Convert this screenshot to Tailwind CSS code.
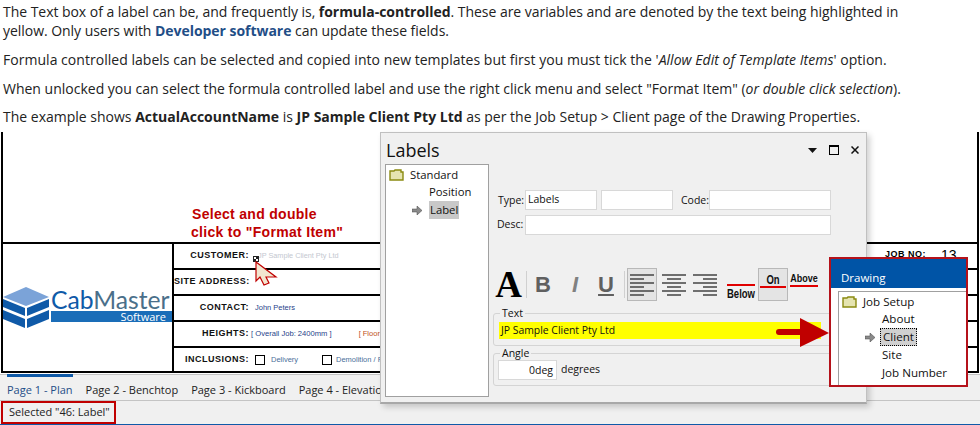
<!DOCTYPE html>
<html>
<head>
<meta charset="utf-8">
<script src="https://cdn.jsdelivr.net/npm/@tailwindcss/browser@4"></script>
</head>
<body class="bg-white overflow-hidden font-['Open_Sans',sans-serif]">
<div class="relative w-[980px] h-[425px] overflow-hidden flex flex-col">
  <!-- help text -->
  <div class="h-[132px] shrink-0 pl-[3px] pt-[2px] text-[14px] leading-[19px] text-[#222]">
    <p class="whitespace-nowrap tracking-[-0.04px]">The Text box of a label can be, and frequently is, <b>formula-controlled</b>. These are variables and are denoted by the text being highlighted in</p>
    <p class="whitespace-nowrap tracking-[-0.04px]">yellow. Only users with <b class="text-[#1f4e87]">Developer software</b> can update these fields.</p>
    <p class="whitespace-nowrap mt-[10px] tracking-[0.03px]">Formula controlled labels can be selected and copied into new templates but first you must tick the '<i>Allow Edit of Template Items</i>' option.</p>
    <p class="whitespace-nowrap mt-[10px]">When unlocked you can select the formula controlled label and use the right click menu and select "Format Item" (<i>or double click selection</i>).</p>
    <p class="whitespace-nowrap mt-[9px]">The example shows <b>ActualAccountName</b> is <b>JP Sample Client Pty Ltd</b> as per the Job Setup &gt; Client page of the Drawing Properties.</p>
  </div>

  <!-- drawing sheet -->
  <div class="h-[241px] shrink-0 ml-[1px] mr-[1px] border-x-2 border-b-2 border-black flex flex-col font-['Liberation_Sans',sans-serif]">
    <div class="h-[112px] shrink-0 border-b-2 border-black pl-[188px] pt-[73px] text-[14px] leading-[18px] font-bold text-[#c00000] tracking-[0.3px]">
      <div class="pl-[1px]">Select and double</div>
      <div>click to "Format Item"</div>
    </div>
    <div class="flex-1 flex">
      <div class="w-[171px] shrink-0 border-r-2 border-black flex items-center gap-[2px]">
        <svg width="46" height="42" viewBox="0 0 46 42" class="shrink-0"><polygon points="0,10 23,0 46,10 23,19" fill="#7ba3d8"/><polygon points="0,12 22,21 22,29 0,20" fill="#0f5aa8"/><polygon points="24,21 46,12 46,20 24,29" fill="#0f5aa8"/><polygon points="0,23 22,32 22,41 0,32" fill="#0f5aa8"/><polygon points="24,32 46,23 46,32 24,41" fill="#0f5aa8"/></svg>
        <div class="w-[121px] shrink-0 flex flex-col mb-[5px]">
          <div class="h-[22px] text-[24.7px] leading-[22px] font-['Lato',sans-serif] font-normal whitespace-nowrap"><span class="text-[#0f5aa8]">Cab</span><span class="text-[#4a6f8a]">Master</span></div>
          <div class="h-[11px] bg-[#1a6db8] text-right pr-[6px] text-white text-[11px] leading-[11px] font-['Open_Sans',sans-serif]">Software</div>
        </div>
      </div>
      <div class="flex-1 flex flex-col text-[9px] font-bold tracking-[0.5px] text-[#111]">
        <div class="h-[26px] shrink-0 border-b-2 border-black flex items-center"><span class="w-[75px] text-right whitespace-nowrap">CUSTOMER:</span><span class="ml-[9px] text-[7.3px] font-normal tracking-normal text-[#c4c8d0] whitespace-nowrap">JP Sample Client Pty Ltd</span></div>
        <div class="h-[26px] shrink-0 border-b-2 border-black flex items-center"><span class="w-[75px] text-right whitespace-nowrap">SITE ADDRESS:</span></div>
        <div class="h-[26px] shrink-0 border-b-2 border-black flex items-center"><span class="w-[75px] text-right whitespace-nowrap">CONTACT:</span><span class="ml-[6px] text-[7.5px] font-normal tracking-normal text-[#1f3f8a] whitespace-nowrap">John Peters</span></div>
        <div class="h-[26px] shrink-0 border-b-2 border-black flex items-center"><span class="w-[75px] text-right whitespace-nowrap">HEIGHTS:</span><span class="ml-[2px] text-[7.6px] font-normal tracking-normal text-[#1f3f8a] whitespace-nowrap">[ Overall Job: 2400mm ]</span><span class="ml-[27px] text-[7.5px] font-normal tracking-normal text-[#c0501a] whitespace-nowrap">[ Floor</span></div>
        <div class="flex-1 flex items-center"><span class="w-[75px] text-right whitespace-nowrap">INCLUSIONS:</span>
          <span class="ml-[6px] w-[10px] h-[10px] border border-black"></span><span class="ml-[6px] w-[51px] text-[7.5px] font-normal tracking-normal text-[#4a6f9a] whitespace-nowrap">Delivery</span>
          <span class="w-[10px] h-[10px] border border-black"></span><span class="ml-[4px] text-[7.5px] font-normal tracking-normal text-[#4a6f9a] whitespace-nowrap">Demolition / R</span></div>
      </div>
    </div>
  </div>

  <!-- tabs -->
  <div class="mt-[1px] h-[27px] shrink-0 bg-[#f0f0f0] border-y border-[#c4c4c4] relative pl-[7px] flex items-end gap-[13px] pb-[2px] text-[11px] leading-[16px] text-[#222] font-['Open_Sans',sans-serif] whitespace-nowrap">
    <span class="text-[#1f4e87] relative">Page 1 - Plan<span class="absolute left-0 right-0 -top-[8px] h-[3px] bg-[#0f5aa8]"></span></span>
    <span>Page 2 - Benchtop</span>
    <span>Page 3 - Kickboard</span>
    <span>Page 4 - Elevations</span>
  </div>

  <!-- status -->
  <div class="flex-1 bg-[#f0f0f0] border-b border-[#0f5aa8] font-['Open_Sans',sans-serif] text-[11px] text-[#222]">
    <div class="w-[115px] ml-[1px] h-[23px] border-2 border-[#c00000] flex items-center pl-[6px] whitespace-nowrap">Selected "46: Label"</div>
  </div>

  <!-- cursor over customer label -->
  <svg class="absolute left-[252px] top-[255px]" width="26" height="32" viewBox="0 0 26 32"><rect x="1" y="1" width="6" height="6" fill="#222"/><rect x="2" y="2" width="2" height="2" fill="#fff"/><rect x="4" y="4" width="2" height="2" fill="#fff"/><path d="M4 7 L4 26 L8 22 L12 30 L17 28 L14 22 L24 22 Z" fill="#f2e6d0" stroke="#c00000" stroke-width="1.2"/></svg>

  <!-- job no behind popup -->
  <div class="absolute left-[885px] top-[247px] flex items-center gap-[15px] font-['Liberation_Sans',sans-serif] whitespace-nowrap"><span class="text-[9px] font-bold tracking-[0.5px]">JOB NO:</span><span class="text-[14px] leading-[16px]">13</span></div>

  <!-- Labels dialog -->
  <div class="absolute left-[380px] top-[132px] w-[487px] h-[272px] bg-[#f0f0f0] border border-[#c0c0c0] border-b-[2px] border-b-[#a8a8a8] shadow-[3px_3px_6px_rgba(0,0,0,0.18)] text-[#111]">
    <div class="absolute left-[5px] top-[5px] text-[18px] leading-[24px]">Labels</div>
    <div class="absolute right-[7px] top-[12px] flex items-center gap-[12px]">
      <svg width="9" height="5" viewBox="0 0 9 5"><polygon points="0,0 9,0 4.5,5" fill="#111"/></svg>
      <span class="w-[8px] h-[7px] border border-black border-t-2 box-content"></span>
      <svg width="8" height="8" viewBox="0 0 8 8"><path d="M0.5 0.5 L7.5 7.5 M7.5 0.5 L0.5 7.5" stroke="#111" stroke-width="1.5"/></svg>
    </div>

    <!-- tree -->
    <div class="absolute left-[4px] top-[31px] w-[104px] h-[233px] bg-white border border-[#a0a0a0] text-[11.3px] leading-[18px]">
      <div class="flex items-center gap-[6px] pl-[3px] pt-[1px] h-[18px]">
        <svg width="15" height="12" viewBox="0 0 15 12"><path d="M1 2 H5 L6 1 H12 V3 H14 V11 H1 Z" fill="#e5e4b0" stroke="#8a8a10" stroke-width="1.4"/></svg>
        <span>Standard</span>
      </div>
      <div class="pl-[43px]">Position</div>
      <div class="flex items-center pl-[26px]">
        <svg width="10" height="9" viewBox="0 0 10 9"><path d="M0 3 H5 V0 L10 4.5 L5 9 V6 H0 Z" fill="#8a8a8a" stroke="#444" stroke-width="0.5"/></svg>
        <span class="ml-[7px] px-[1px] bg-[#c8c8c8]">Label</span>
      </div>
    </div>

    <!-- type/desc -->
    <div class="absolute left-[117px] top-[57px] flex items-center gap-[1px] text-[10.5px] h-[20px]">
      <span class="w-[26px] pt-[1px]">Type:</span>
      <span class="w-[72px] h-[20px] bg-white border border-[#d8d8d8] pl-[2px] leading-[17px]">Labels</span>
      <span class="ml-[3px] w-[72px] h-[20px] bg-white border border-[#d8d8d8]"></span>
      <span class="ml-[7px] w-[27px] pt-[1px]">Code:</span>
      <span class="w-[122px] h-[20px] bg-white border border-[#d8d8d8]"></span>
    </div>
    <div class="absolute left-[116px] top-[82px] flex items-center gap-[1px] text-[10.5px] h-[20px]">
      <span class="w-[27px]">Desc:</span>
      <span class="w-[306px] h-[20px] bg-white border border-[#d8d8d8]"></span>
    </div>

    <!-- toolbar -->
    <div class="absolute left-[114px] top-[135px] w-[340px] h-[33px] flex items-center font-['Liberation_Serif',serif]">
      <span class="w-[27px] text-[37px] leading-[33px] font-bold text-center text-black">A</span>
      <span class="ml-[4px] w-[1px] h-[27px] bg-[#d0d0d0]"></span>
      <span class="ml-[8px] w-[16px] text-[22px] font-bold font-['Liberation_Sans',sans-serif] text-[#606060] text-center">B</span>
      <span class="ml-[16px] w-[16px] text-[22px] italic font-bold font-['Liberation_Sans',sans-serif] text-[#808080] text-center">I</span>
      <span class="ml-[14px] w-[18px] text-[22px] font-bold font-['Liberation_Sans',sans-serif] text-[#606060] text-center underline underline-offset-2">U</span>
      <span class="ml-[9px] w-[1px] h-[27px] bg-[#d0d0d0]"></span>
      <span class="ml-[2px] w-[30px] h-[33px] bg-[#e4e4e4] border border-[#b8b8b8] flex items-center justify-center">
        <svg width="24" height="22" viewBox="0 0 24 22"><path d="M0 1 H24 M0 5 H14 M0 9 H24 M0 13 H14 M0 17 H24 M0 21 H14" stroke="#444" stroke-width="1.6"/></svg></span>
      <span class="ml-[5px]"><svg class="block" width="24" height="22" viewBox="0 0 24 22"><path d="M0 1 H24 M5 5 H19 M0 9 H24 M5 13 H19 M0 17 H24 M5 21 H19" stroke="#444" stroke-width="1.6"/></svg></span>
      <span class="ml-[7px]"><svg class="block" width="24" height="22" viewBox="0 0 24 22"><path d="M0 1 H24 M10 5 H24 M0 9 H24 M10 13 H24 M0 17 H24 M10 21 H24" stroke="#444" stroke-width="1.6"/></svg></span>
      <span class="ml-[10px] w-[28px] h-[33px] flex flex-col items-center pt-[16px] font-['Liberation_Sans',sans-serif]"><span class="w-[28px] h-[2px] bg-[#e00000]"></span><span class="text-[9.5px] leading-[15px] font-bold scale-y-125">Below</span></span>
      <span class="ml-[3px] w-[30px] h-[33px] bg-[#e4e4e4] border border-[#b8b8b8] flex flex-col items-center pt-[5px] font-['Liberation_Sans',sans-serif]"><span class="text-[9.5px] leading-[12px] font-bold scale-y-125">On</span><span class="w-[26px] h-[2px] bg-[#e00000]"></span></span>
      <span class="ml-[2px] w-[28px] h-[33px] flex flex-col items-center pt-[3px] font-['Liberation_Sans',sans-serif]"><span class="text-[9px] leading-[14px] font-bold scale-y-125">Above</span><span class="w-[28px] h-[2px] bg-[#e00000]"></span></span>
    </div>

    <!-- text group -->
    <fieldset class="absolute left-[112px] top-[174px] w-[340px] h-[39px] border border-[#d4d4d4] rounded-[3px] px-[5px] text-[10.5px]">
      <legend class="ml-[1px] px-[2px] leading-[12px]">Text</legend>
      <div class="mt-[3px] h-[17px] w-[322px] bg-[#ffff00] text-[10.4px] leading-[17px] pl-[2px] whitespace-nowrap">JP Sample Client Pty Ltd</div>
    </fieldset>

    <!-- angle group -->
    <fieldset class="absolute left-[112px] top-[214px] w-[340px] h-[39px] border border-[#d4d4d4] rounded-[3px] px-[4px] text-[10.5px]">
      <legend class="ml-[2px] px-[2px] leading-[12px]">Angle</legend>
      <div class="mt-[1px] flex items-center h-[20px]">
        <span class="w-[59px] h-[20px] bg-white border border-[#d8d8d8] text-right pr-[3px] leading-[18px]">0deg</span>
        <span class="ml-[4px]">degrees</span>
      </div>
    </fieldset>
  </div>

  <!-- red arrow -->
  <svg class="absolute left-[776px] top-[318px]" width="54" height="30" viewBox="0 0 54 30"><path d="M3 14 H26" stroke="#c00000" stroke-width="6" stroke-linecap="round"/><polygon points="24,0 53,15 24,29" fill="#c00000"/></svg>

  <!-- Drawing popup -->
  <div class="absolute left-[829px] top-[257px] w-[139px] h-[130px] bg-white border-[2px] border-[#b5121b] flex flex-col text-[#111]">
    <div class="h-[29px] shrink-0 bg-[#0054a6] text-white text-[11.5px] pl-[10px] pt-[11px] leading-[16px]">Drawing</div>
    <div class="flex-1 ml-[7px] mt-[3px] border-l border-t border-[#a0a0a0] text-[11.6px] leading-[18px]">
      <div class="flex items-center gap-[6px] pl-[3px] pt-[1px] h-[18px]">
        <svg width="15" height="12" viewBox="0 0 15 12"><path d="M1 2 H5 L6 1 H12 V3 H14 V11 H1 Z" fill="#e5e4b0" stroke="#8a8a10" stroke-width="1.4"/></svg>
        <span>Job Setup</span>
      </div>
      <div class="pl-[43px]">About</div>
      <div class="flex items-center pl-[26px]">
        <svg width="10" height="9" viewBox="0 0 10 9"><path d="M0 3 H5 V0 L10 4.5 L5 9 V6 H0 Z" fill="#8a8a8a" stroke="#444" stroke-width="0.5"/></svg>
        <span class="ml-[5px] px-[2px] leading-[16px] bg-[#d0d0d0] border border-dotted border-black">Client</span>
      </div>
      <div class="pl-[43px]">Site</div>
      <div class="pl-[43px] whitespace-nowrap">Job Number</div>
    </div>
  </div>
</div>
</body>
</html>
